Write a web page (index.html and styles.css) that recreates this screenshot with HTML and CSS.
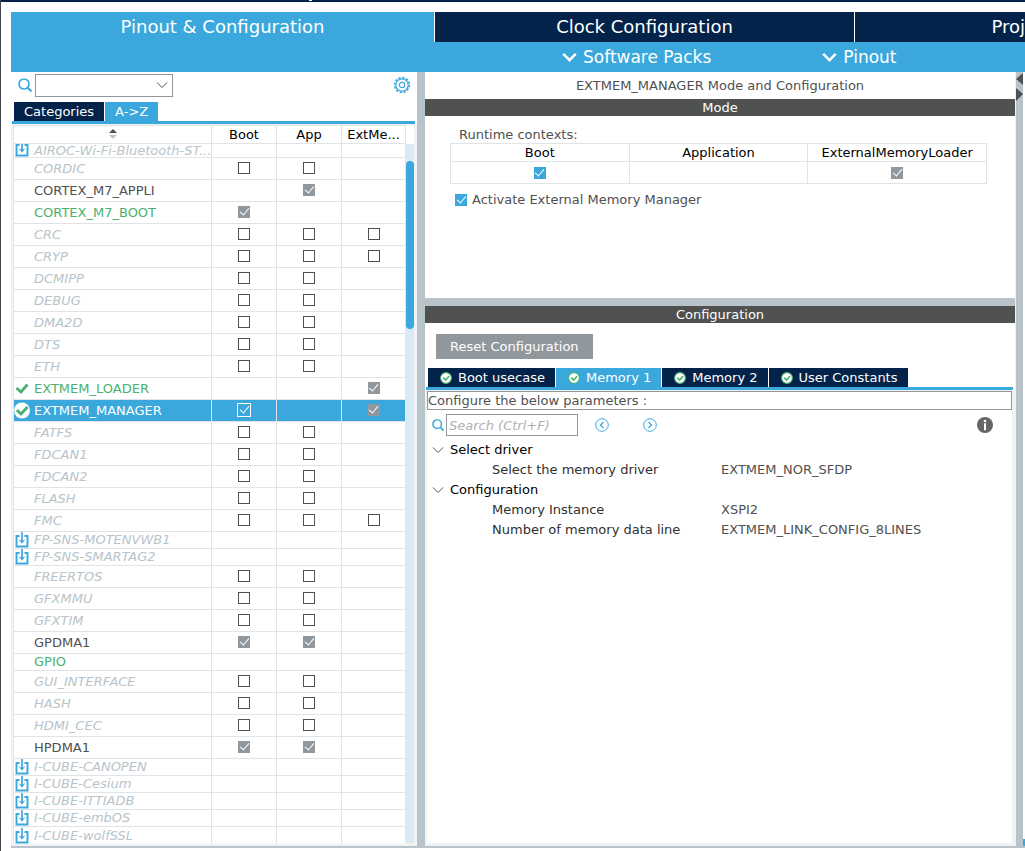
FILE: index.html
```html
<!DOCTYPE html>
<html lang="en">
<head>
    <meta charset="UTF-8">
    <meta name="viewport" content="width=device-width, initial-scale=1.0">
    <title>Pinout &amp; Configuration</title>
    <link rel="stylesheet" href="styles.css">
</head>
<body>
    <svg class="symbols" aria-hidden="true">
        <defs>
            <symbol id="search" viewBox="0 0 14 14">
                <circle cx="6" cy="6" r="5" fill="none" stroke="#3aa8dc" stroke-width="1.7"/>
                <path d="M9.5 9.5l4 4" stroke="#3aa8dc" stroke-width="2"/>
            </symbol>
            <symbol id="pack" viewBox="0 0 14 16">
                <path d="M4.5 4H1.500v10.500h11V4H9.500" fill="none" stroke="#3aa8dc" stroke-width="1.900"/>
                <path d="M7 0v10" stroke="#3aa8dc" stroke-width="1.700"/>
                <path d="M3.500 7L7 11.800 10.500 7 7 9z" fill="#3aa8dc"/>
            </symbol>
            <symbol id="tick" viewBox="0 0 16 14">
                <path d="M2.500 6.500l4.500 4 6.500-7.500" fill="none" stroke="#49b170" stroke-width="2.800"/>
            </symbol>
            <symbol id="tick-round" viewBox="0 0 16 16">
                <circle cx="8" cy="8" r="8" fill="#fff"/>
                <path d="M2.800 7.500l4.200 4 6.500-7" fill="none" stroke="#49b170" stroke-width="2.800"/>
            </symbol>
            <symbol id="valid" viewBox="0 0 12 12">
                <circle cx="6" cy="6" r="5.400" fill="#fff" stroke="#49b170" stroke-width="1.100"/>
                <path d="M3.200 5.600l2.400 2.400 3.500-3.700" fill="none" stroke="#49b170" stroke-width="1.600"/>
            </symbol>
            <symbol id="chevron" viewBox="0 0 12 8">
                <path d="M1 1.500l5 5 5-5" fill="none" stroke="currentColor"/>
            </symbol>
        </defs>
    </svg>

    <div class="window">
        <div class="title-strip"><span></span></div>

        <header class="header">
            <a class="main-tab active" href="#pinout">Pinout &amp; Configuration</a>
            <a class="main-tab" href="#clock">Clock Configuration</a>
            <a class="main-tab" href="#project">Project Manager</a>
            <nav class="sub-menu">
                <button type="button"><svg class="menu-arrow"><use href="#chevron"/></svg>Software Packs</button>
                <button type="button"><svg class="menu-arrow"><use href="#chevron"/></svg>Pinout</button>
            </nav>
        </header>

        <main class="workspace">
            <section class="ip-panel">
                <div class="ip-search">
                    <svg class="search-icon"><use href="#search"/></svg>
                    <span class="select-wrap">
                        <select aria-label="Search peripheral"><option></option></select>
                        <svg class="select-arrow"><use href="#chevron"/></svg>
                    </span>
                    <button class="settings" type="button" aria-label="Settings">
                        <svg width="18" height="18" viewBox="0 0 18 18">
                            <circle cx="9" cy="9" r="6.200" fill="none" stroke="#3aa8dc" stroke-width="1.200"/>
                            <circle cx="9" cy="9" r="7.400" fill="none" stroke="#3aa8dc" stroke-width="1.600" stroke-dasharray="2.300 1.575"/>
                            <circle cx="9" cy="9" r="2.700" fill="none" stroke="#3aa8dc" stroke-width="1.200"/>
                        </svg>
                    </button>
                </div>
                <div class="tabs ip-tabs">
                    <button type="button">Categories</button>
                    <button type="button" class="active">A-&gt;Z</button>
                </div>
                <div class="ip-scroll">
                    <table class="ip-table">
                        <colgroup><col><col class="ctx"><col class="ctx"><col class="ctx-last"></colgroup>
                        <thead>
                            <tr>
                                <th aria-label="Name"><svg class="sort" viewBox="0 0 8 12"><path d="M0 4l4-4 4 4z" fill="#505050"/><path d="M0 6h8l-4 4z" fill="#c4c4c4"/></svg></th>
                                <th>Boot</th><th>App</th><th>ExtMe...</th>
                            </tr>
                        </thead>
                        <tbody>
                            <tr class="off pack first"><td><svg class="icon"><use href="#pack"/></svg>AIROC-Wi-Fi-Bluetooth-ST...</td><td></td><td></td><td></td></tr>
                            <tr class="off"><td>CORDIC</td><td><input type="checkbox" aria-label="CORDIC Boot"></td><td><input type="checkbox" aria-label="CORDIC App"></td><td></td></tr>
                            <tr><td>CORTEX_M7_APPLI</td><td></td><td><input type="checkbox" aria-label="CORTEX_M7_APPLI App" checked disabled></td><td></td></tr>
                            <tr class="on"><td>CORTEX_M7_BOOT</td><td><input type="checkbox" aria-label="CORTEX_M7_BOOT Boot" checked disabled></td><td></td><td></td></tr>
                            <tr class="off"><td>CRC</td><td><input type="checkbox" aria-label="CRC Boot"></td><td><input type="checkbox" aria-label="CRC App"></td><td><input type="checkbox" aria-label="CRC ExtMemLoader"></td></tr>
                            <tr class="off"><td>CRYP</td><td><input type="checkbox" aria-label="CRYP Boot"></td><td><input type="checkbox" aria-label="CRYP App"></td><td><input type="checkbox" aria-label="CRYP ExtMemLoader"></td></tr>
                            <tr class="off"><td>DCMIPP</td><td><input type="checkbox" aria-label="DCMIPP Boot"></td><td><input type="checkbox" aria-label="DCMIPP App"></td><td></td></tr>
                            <tr class="off"><td>DEBUG</td><td><input type="checkbox" aria-label="DEBUG Boot"></td><td><input type="checkbox" aria-label="DEBUG App"></td><td></td></tr>
                            <tr class="off"><td>DMA2D</td><td><input type="checkbox" aria-label="DMA2D Boot"></td><td><input type="checkbox" aria-label="DMA2D App"></td><td></td></tr>
                            <tr class="off"><td>DTS</td><td><input type="checkbox" aria-label="DTS Boot"></td><td><input type="checkbox" aria-label="DTS App"></td><td></td></tr>
                            <tr class="off"><td>ETH</td><td><input type="checkbox" aria-label="ETH Boot"></td><td><input type="checkbox" aria-label="ETH App"></td><td></td></tr>
                            <tr class="on"><td><svg class="icon"><use href="#tick"/></svg>EXTMEM_LOADER</td><td></td><td></td><td><input type="checkbox" aria-label="EXTMEM_LOADER ExtMemLoader" checked disabled></td></tr>
                            <tr class="selected"><td><svg class="icon"><use href="#tick-round"/></svg>EXTMEM_MANAGER</td><td><input type="checkbox" aria-label="EXTMEM_MANAGER Boot" checked></td><td></td><td><input type="checkbox" aria-label="EXTMEM_MANAGER ExtMemLoader" checked disabled></td></tr>
                            <tr class="off"><td>FATFS</td><td><input type="checkbox" aria-label="FATFS Boot"></td><td><input type="checkbox" aria-label="FATFS App"></td><td></td></tr>
                            <tr class="off"><td>FDCAN1</td><td><input type="checkbox" aria-label="FDCAN1 Boot"></td><td><input type="checkbox" aria-label="FDCAN1 App"></td><td></td></tr>
                            <tr class="off"><td>FDCAN2</td><td><input type="checkbox" aria-label="FDCAN2 Boot"></td><td><input type="checkbox" aria-label="FDCAN2 App"></td><td></td></tr>
                            <tr class="off"><td>FLASH</td><td><input type="checkbox" aria-label="FLASH Boot"></td><td><input type="checkbox" aria-label="FLASH App"></td><td></td></tr>
                            <tr class="off"><td>FMC</td><td><input type="checkbox" aria-label="FMC Boot"></td><td><input type="checkbox" aria-label="FMC App"></td><td><input type="checkbox" aria-label="FMC ExtMemLoader"></td></tr>
                            <tr class="off pack"><td><svg class="icon"><use href="#pack"/></svg>FP-SNS-MOTENVWB1</td><td></td><td></td><td></td></tr>
                            <tr class="off pack"><td><svg class="icon"><use href="#pack"/></svg>FP-SNS-SMARTAG2</td><td></td><td></td><td></td></tr>
                            <tr class="off"><td>FREERTOS</td><td><input type="checkbox" aria-label="FREERTOS Boot"></td><td><input type="checkbox" aria-label="FREERTOS App"></td><td></td></tr>
                            <tr class="off"><td>GFXMMU</td><td><input type="checkbox" aria-label="GFXMMU Boot"></td><td><input type="checkbox" aria-label="GFXMMU App"></td><td></td></tr>
                            <tr class="off"><td>GFXTIM</td><td><input type="checkbox" aria-label="GFXTIM Boot"></td><td><input type="checkbox" aria-label="GFXTIM App"></td><td></td></tr>
                            <tr><td>GPDMA1</td><td><input type="checkbox" aria-label="GPDMA1 Boot" checked disabled></td><td><input type="checkbox" aria-label="GPDMA1 App" checked disabled></td><td></td></tr>
                            <tr class="on pack"><td>GPIO</td><td></td><td></td><td></td></tr>
                            <tr class="off"><td>GUI_INTERFACE</td><td><input type="checkbox" aria-label="GUI_INTERFACE Boot"></td><td><input type="checkbox" aria-label="GUI_INTERFACE App"></td><td></td></tr>
                            <tr class="off"><td>HASH</td><td><input type="checkbox" aria-label="HASH Boot"></td><td><input type="checkbox" aria-label="HASH App"></td><td></td></tr>
                            <tr class="off"><td>HDMI_CEC</td><td><input type="checkbox" aria-label="HDMI_CEC Boot"></td><td><input type="checkbox" aria-label="HDMI_CEC App"></td><td></td></tr>
                            <tr><td>HPDMA1</td><td><input type="checkbox" aria-label="HPDMA1 Boot" checked disabled></td><td><input type="checkbox" aria-label="HPDMA1 App" checked disabled></td><td></td></tr>
                            <tr class="off pack"><td><svg class="icon"><use href="#pack"/></svg>I-CUBE-CANOPEN</td><td></td><td></td><td></td></tr>
                            <tr class="off pack"><td><svg class="icon"><use href="#pack"/></svg>I-CUBE-Cesium</td><td></td><td></td><td></td></tr>
                            <tr class="off pack"><td><svg class="icon"><use href="#pack"/></svg>I-CUBE-ITTIADB</td><td></td><td></td><td></td></tr>
                            <tr class="off pack"><td><svg class="icon"><use href="#pack"/></svg>I-CUBE-embOS</td><td></td><td></td><td></td></tr>
                            <tr class="off pack"><td><svg class="icon"><use href="#pack"/></svg>I-CUBE-wolfSSL</td><td></td><td></td><td></td></tr>
                        </tbody>
                    </table>
                    <div class="scrollbar"><div class="corner"></div><div class="track"><div class="thumb"></div></div></div>
                </div>
            </section>

            <div class="splitter"></div>

            <section class="detail">
                <h1 class="detail-title">EXTMEM_MANAGER Mode and Configuration</h1>
                <h2 class="bar">Mode</h2>
                <div class="mode">
                    <p class="mode-label">Runtime contexts:</p>
                    <table class="context-table">
                        <thead><tr><th>Boot</th><th>Application</th><th>ExternalMemoryLoader</th></tr></thead>
                        <tbody>
                            <tr>
                                <td><input type="checkbox" aria-label="Boot" checked></td>
                                <td></td>
                                <td><input type="checkbox" aria-label="ExternalMemoryLoader" checked disabled></td>
                            </tr>
                        </tbody>
                    </table>
                    <label class="activate"><input type="checkbox" checked>Activate External Memory Manager</label>
                </div>
                <div class="splitter-row"></div>
                <h2 class="bar">Configuration</h2>
                <div class="config-actions"><button class="reset" type="button">Reset Configuration</button></div>
                <div class="tabs config-tabs">
                    <button type="button"><svg><use href="#valid"/></svg>Boot usecase</button>
                    <button type="button" class="active"><svg><use href="#valid"/></svg>Memory 1</button>
                    <button type="button"><svg><use href="#valid"/></svg>Memory 2</button>
                    <button type="button"><svg><use href="#valid"/></svg>User Constants</button>
                </div>
                <div class="params">
                    <p class="hint">Configure the below parameters :</p>
                    <div class="params-body">
                        <div class="param-search">
                            <svg class="search-small"><use href="#search"/></svg>
                            <input type="text" placeholder="Search (Ctrl+F)" aria-label="Search parameters">
                            <button type="button" aria-label="Previous">
                                <svg width="14" height="14" viewBox="0 0 14 14" fill="none" stroke="#3aa8dc"><circle cx="7" cy="7" r="6.300"/><path d="M8.500 4l-3 3 3 3" stroke-width="1.300"/></svg>
                            </button>
                            <button type="button" aria-label="Next">
                                <svg width="14" height="14" viewBox="0 0 14 14" fill="none" stroke="#3aa8dc"><circle cx="7" cy="7" r="6.300"/><path d="M5.500 4l3 3-3 3" stroke-width="1.300"/></svg>
                            </button>
                            <button type="button" class="info" aria-label="Information">
                                <svg width="16" height="16" viewBox="0 0 16 16"><circle cx="8" cy="8" r="8" fill="#666"/><circle cx="8" cy="4" r="1.300" fill="#fff"/><path d="M8 6.200v7" stroke="#fff" stroke-width="2"/></svg>
                            </button>
                        </div>
                        <div class="group"><svg><use href="#chevron"/></svg>Select driver</div>
                        <dl>
                            <dt>Select the memory driver</dt><dd>EXTMEM_NOR_SFDP</dd>
                        </dl>
                        <div class="group"><svg><use href="#chevron"/></svg>Configuration</div>
                        <dl>
                            <dt>Memory Instance</dt><dd>XSPI2</dd>
                            <dt>Number of memory data line</dt><dd>EXTMEM_LINK_CONFIG_8LINES</dd>
                        </dl>
                    </div>
                </div>
            </section>

            <div class="edge-splitter">
                <svg width="7" height="28" viewBox="0 0 7 28" fill="#505050"><path d="M7 0v12L0 6zM0 15l7 6-7 7z"/></svg>
            </div>
            <div class="next-panel"><span></span></div>
        </main>
    </div>
</body>
</html>
```
FILE: styles.css
```css
* {
    box-sizing: border-box;
}

body {
    margin: 0;
    font-family: "DejaVu Sans", sans-serif;
    font-size: 13px;
    line-height: 16px;
    color: #505050;
    background: #fff;
    overflow: hidden;
}

h1, h2, p, dl, dd {
    margin: 0;
    font-size: 13px;
    font-weight: normal;
}

button {
    font: inherit;
    border: 0;
    padding: 0;
    background: none;
    cursor: pointer;
}

svg {
    display: block;
    flex: none;
}

.symbols {
    position: absolute;
    width: 0;
    height: 0;
}

.window {
    display: flex;
    flex-direction: column;
    height: 100vh;
    padding-bottom: 3px;
    border-left: 1px solid #45454f;
}

/* header */
.title-strip {
    flex: none;
    height: 2px;
    margin-bottom: 10px;
    padding-left: 308px;
    background: #03234b;
}

.title-strip span {
    display: block;
    width: 3px;
    height: 1px;
    background: #fff;
}

/* the last tab runs past the right edge on narrow windows */
.header {
    flex: none;
    display: grid;
    grid-template-columns: minmax(423px, 1fr) minmax(419px, 1fr) minmax(419px, 1fr);
    grid-template-rows: 30px 30px;
    column-gap: 1px;
    margin-left: 10px;
    overflow: hidden;
}

.main-tab {
    font-size: 18px;
    line-height: 30px;
    text-align: center;
    text-decoration: none;
    color: #fff;
    background: #03234b;
}

.main-tab.active {
    grid-row: span 2;
    background: #3aa8dc;
}

.sub-menu {
    grid-column: 2 / 4;
    display: flex;
    gap: 111px;
    margin-left: -1px;
    padding-left: 128px;
    background: #3aa8dc;
}

.sub-menu button {
    display: flex;
    align-items: center;
    gap: 6px;
    font-size: 17px;
    color: #fff;
}

.menu-arrow {
    width: 15px;
    height: 10px;
    stroke-width: 2;
}

/* columns */
.workspace {
    flex: 1;
    min-height: 0;
    display: flex;
    margin-left: 10px;
    border-bottom: 2px solid #b8c4ca;
}

.splitter {
    flex: none;
    width: 8px;
    background: #b8c4ca;
}

.edge-splitter {
    flex: none;
    width: 7px;
    padding-top: 1px;
    background: #b8c4ca;
}

.next-panel {
    flex: none;
    width: 2px;
    display: flex;
    align-items: flex-end;
}

.next-panel span {
    width: 2px;
    height: 7px;
    background: #3aa8dc;
}

/* peripheral list */
.ip-panel {
    flex: none;
    width: 406px;
    display: flex;
    flex-direction: column;
}

.ip-search {
    display: flex;
    align-items: center;
    gap: 3px;
    height: 30px;
    padding: 0 6px 4px 7px;
}

.search-icon {
    width: 14px;
    height: 14px;
}

.select-wrap {
    display: grid;
    align-items: center;
    justify-items: end;
}

.select-wrap > * {
    grid-area: 1 / 1;
}

.select-wrap select {
    appearance: none;
    width: 138px;
    height: 23px;
    border: 1px solid #90989e;
    border-radius: 0;
    background: #fff;
}

.select-arrow {
    width: 12px;
    height: 8px;
    margin-right: 5px;
    pointer-events: none;
}

.settings {
    margin-left: auto;
}

.tabs {
    flex: none;
    display: flex;
    gap: 1px;
    height: 22px;
    border-bottom: 3px solid #3aa8dc;
}

.tabs button {
    display: flex;
    align-items: center;
    gap: 6px;
    color: #fff;
    background: #03234b;
}

.tabs button.active {
    background: #3aa8dc;
}

.ip-tabs {
    margin: 0 2px 0 1px;
    padding-left: 2px;
}

.ip-tabs button {
    padding: 0 10px;
}

.ip-scroll {
    flex: 1;
    min-height: 0;
    display: flex;
    padding: 1px 3px 3px 2px;
    background: #f0f2f3;
}

.ip-table {
    flex: 1;
    align-self: flex-start;
    table-layout: fixed;
    width: 392px;
    border-spacing: 0;
    border-left: 1px solid #e1e4e6;
    background: #fff;
}

.ctx {
    width: 65px;
}

.ctx-last {
    width: 63px;
}

.ip-table th,
.context-table th {
    font-weight: normal;
    color: #000;
}

.ip-table th,
.ip-table td {
    height: 22px;
    padding: 0;
    border-right: 1px solid #e1e4e6;
    border-bottom: 1px solid #e1e4e6;
    text-align: center;
    white-space: nowrap;
}

.ip-table th {
    height: 19px;
    border-top: 1px solid #e1e4e6;
}

.ip-table th:last-child,
.ip-table td:last-child {
    border-right: 0;
}

.ip-table td:first-child {
    position: relative;
    padding-left: 20px;
    text-align: left;
}

.ip-table tr.pack td {
    height: 17px;
    line-height: 16px;
}

/* first visible row is scrolled partly under the header */
.ip-table tr.first td {
    height: 14px;
    line-height: 12px;
    overflow: hidden;
}

.ip-table tr:last-child td {
    border-bottom: 0;
}

.off {
    font-style: italic;
    color: #b8c4ca;
}

.on {
    color: #49b170;
}

.selected td {
    color: #fff;
    background: #3aa8dc;
}

.sort {
    width: 8px;
    height: 12px;
    margin: 0 auto;
}

/* status icon lies in the left padding of the name cell */
.icon {
    position: absolute;
    left: 0;
    top: 0;
    width: 16px;
    height: 100%;
}

.pack .icon {
    top: auto;
    bottom: 0;
    height: 16px;
}

input[type="checkbox"] {
    appearance: none;
    display: grid;
    place-items: center;
    flex: none;
    width: 12px;
    height: 12px;
    margin: 0 auto;
    border: 1px solid #505050;
    background: #fff;
}

input[type="checkbox"]:checked {
    border-color: #3aa8dc;
    background: #3aa8dc;
}

input[type="checkbox"]:disabled {
    border-color: #90989e;
    background: #90989e;
}

input[type="checkbox"]:checked::after {
    content: "";
    width: 8px;
    height: 4px;
    margin-bottom: 3px;
    border-left: 1px solid #fff;
    border-bottom: 1px solid #fff;
    transform: rotate(-50deg);
}

.ip-table td input[type="checkbox"] {
    margin-bottom: 1px;
}

.selected input[type="checkbox"]:enabled {
    width: 14px;
    height: 14px;
    border-color: #fff;
}

.scrollbar {
    flex: none;
    width: 9px;
    display: flex;
    flex-direction: column;
}

.corner {
    height: 19px;
    border-left: 1px solid #e1e4e6;
    background: #fff;
}

.track {
    flex: 1;
    padding: 17px 0 0 1px;
    background: #daeaf5;
}

.thumb {
    height: 168px;
    border-radius: 4px;
    background: #3aa8dc;
}

/* right side */
.detail {
    flex: 1;
    min-width: 0;
    display: flex;
    flex-direction: column;
    border-right: 1px solid #f0f2f3;
}

.detail-title {
    flex: none;
    height: 27px;
    line-height: 27px;
    text-align: center;
}

.bar {
    flex: none;
    height: 17px;
    line-height: 17px;
    text-align: center;
    color: #fff;
    background: #4f5250;
}

.mode {
    flex: none;
    height: 182px;
    padding: 11px 28px 0 25px;
}

.mode-label {
    padding-left: 9px;
}

.context-table {
    table-layout: fixed;
    width: 100%;
    border-collapse: collapse;
}

.context-table th,
.context-table td {
    height: 22px;
    padding: 0;
    border: 1px solid #e1e4e6;
    text-align: center;
}

.context-table th {
    height: 18px;
}

.activate {
    display: flex;
    align-items: center;
    gap: 5px;
    margin-top: 8px;
    padding-left: 5px;
}

.activate input[type="checkbox"] {
    margin: 0;
}

.splitter-row {
    flex: none;
    height: 8px;
    background: #b8c4ca;
}

.config-actions {
    padding: 11px 11px 9px;
}

.reset {
    display: block;
    height: 25px;
    padding: 0 14px;
    color: #fff;
    background: #90989e;
}

.config-tabs {
    margin: 0 2px 0 1px;
    padding-left: 2px;
}

.config-tabs button {
    padding: 0 10px 0 12px;
}

.config-tabs svg {
    width: 12px;
    height: 12px;
}

.params {
    flex: 1;
    display: flex;
    flex-direction: column;
    padding: 1px 3px 3px 2px;
    background: #f0f2f3;
}

.hint {
    height: 19px;
    line-height: 17px;
    border: 1px solid #90989e;
    background: #fff;
}

.params-body {
    flex: 1;
    padding: 4px 19px 0 5px;
    background: #fff;
}

.param-search {
    display: flex;
    align-items: center;
    gap: 34px;
    margin-bottom: 4px;
}

.search-small {
    width: 12px;
    height: 12px;
    margin-right: -32px;
}

.param-search input {
    width: 132px;
    height: 22px;
    margin-right: -17px;
    padding: 0 2px;
    border: 1px solid #90989e;
    font: inherit;
}

.param-search input::placeholder {
    font-style: italic;
    color: #b0b0b0;
}

.info {
    margin-left: auto;
}

.group {
    display: flex;
    align-items: center;
    gap: 6px;
    height: 20px;
    color: #000;
}

.group svg {
    width: 12px;
    height: 8px;
    color: #505050;
}

dl {
    display: grid;
    grid-template-columns: 229px 1fr;
    padding-left: 60px;
    line-height: 20px;
}

dt {
    color: #303030;
}
```
